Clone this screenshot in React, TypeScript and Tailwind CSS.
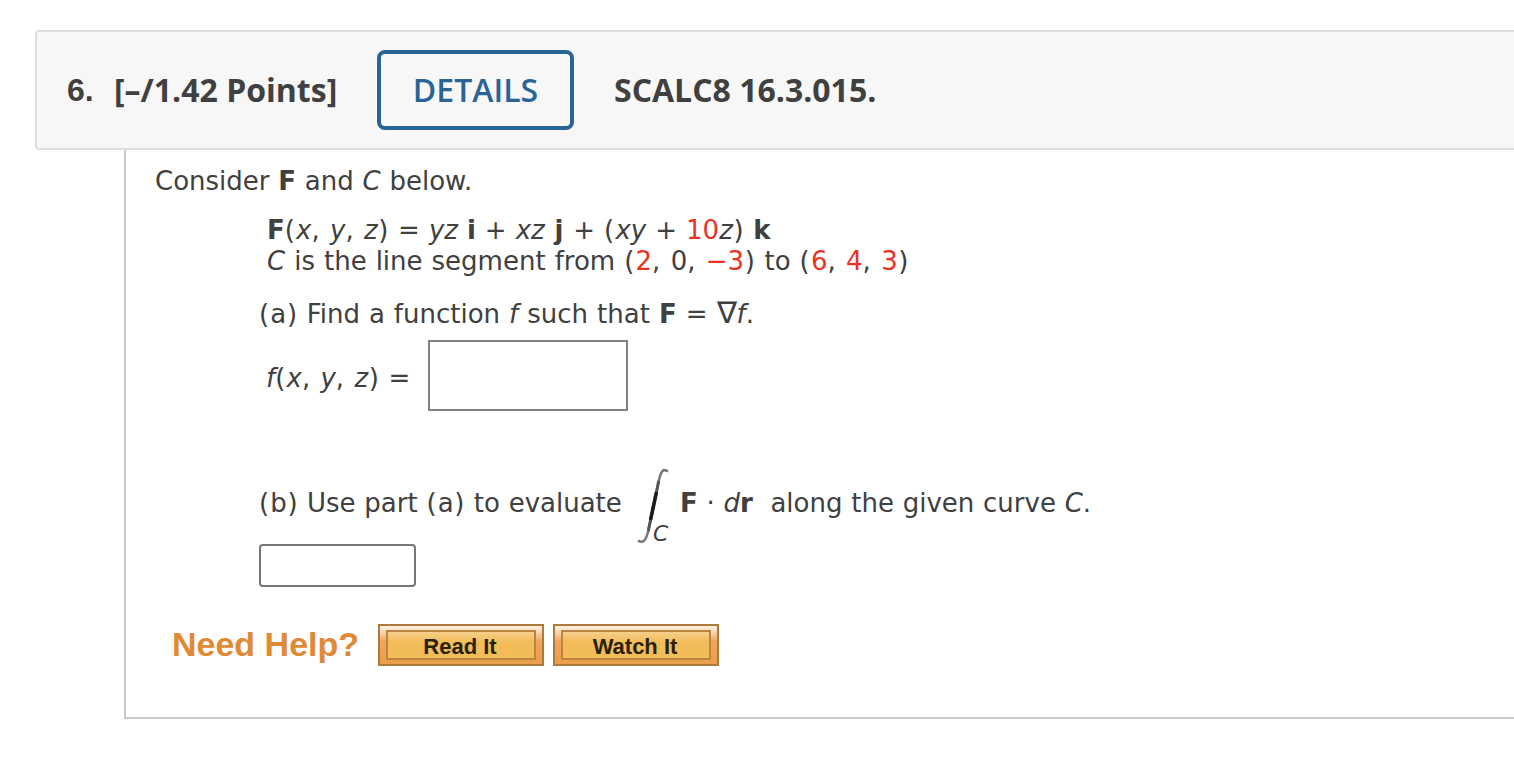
import React, { FC, ReactNode } from "react";

interface ChildrenProps {
  children: ReactNode;
}

// Randomized values are shown in red
const Value: FC<ChildrenProps> = ({ children }) => (
  <span className="text-[#ea3323]">{children}</span>
);

// Parentheses get a little air on both sides
const Paren: FC<ChildrenProps> = ({ children }) => (
  <>
    <span className="pr-[1.2px]">(</span>
    {children}
    <span className="px-[0.6px]">)</span>
  </>
);

const Comma: FC = () => <span className="pr-[1.3px]">, </span>;

const HelpButton: FC<ChildrenProps> = ({ children }) => (
  <button className="h-[42px] w-[166px] border-2 border-[#ae7a3c] bg-linear-to-b from-[#fdebdb] from-5% via-[#efa558] via-40% to-[#ec9f4a] px-[6px] py-[4px]">
    <span className="flex h-full w-full items-center justify-center border-2 border-[#b98541] bg-linear-to-b from-[#f6cf89] to-[#f2bc58] to-40% pt-[3px] pr-[2px] font-['Liberation_Sans',sans-serif] text-[22px] leading-none font-bold [word-spacing:0px] text-[#2b1f08]">
      {children}
    </span>
  </button>
);

const QuestionHeader: FC = () => (
  <header className="ml-[35px] flex h-[120px] items-center rounded-l-[4px] border-2 border-r-0 border-[#dedede] bg-[#f7f7f7] pl-[30px] font-['Open_Sans',sans-serif] text-[32px] font-bold whitespace-nowrap text-[#404040]">
    <span className="w-[47px] pb-px font-['Liberation_Sans',sans-serif]">
      6.
    </span>
    <span className="w-[263px]">[–/1.42 Points]</span>
    <button className="h-[80px] w-[197px] rounded-[8px] border-4 border-[#2a6496] font-semibold text-[#2a6496]">
      DETAILS
    </button>
    <span className="ml-[40px]">SCALC8 16.3.015.</span>
  </header>
);

const Integral: FC = () => (
  <span className="flex w-[34px] items-end">
    <svg width="32" height="76" viewBox="0 0 32 76" fill="none">
      <path
        d="M1 72.5C6 76 9 72 11 64L22 12C24 3 26 0 31 3.5"
        stroke="#777"
        strokeWidth="2.5"
      />
      <path
        d="M11.5 62L21.5 14"
        stroke="#555"
        strokeWidth="3"
        strokeLinecap="round"
      />
      <path d="M13.5 52L19.5 24" stroke="#1a1a1a" strokeWidth="3.5" />
    </svg>
    <i className="-ml-[16px] text-[22px] leading-[20px]">C</i>
  </span>
);

const App: FC = () => {
  return (
    <div className="h-[784px] overflow-hidden bg-white pt-[30px]">
      <QuestionHeader />
      <main className="ml-[124px] h-[569px] border-b-2 border-l-2 border-[#cacaca] font-['DejaVu_Sans',sans-serif] text-[26px] leading-[31px] [word-spacing:0.5px] whitespace-pre text-[#404040]">
        <p className="pt-[16px] pl-[29px]">
          Consider <b>F</b> and <i>C</i> below.
        </p>

        <div className="pt-[18px] pl-[141px] [word-spacing:0.75px]">
          <p>
            <b>F</b>
            <Paren>
              <i>x</i>
              <Comma />
              <i>y</i>
              <Comma />
              <i>z</i>
            </Paren>{" "}
            = <i>yz</i> <b>i</b> + <i>xz</i> <b className="px-[0.8px]">j</b> +{" "}
            <Paren>
              <i>xy</i> + <Value>10</Value>
              <i>z</i>
            </Paren>{" "}
            <b>k</b>
          </p>
          <p>
            <i>C</i> is the line segment from{" "}
            <Paren>
              <Value>2</Value>
              <Comma />0<Comma />
              <Value>−3</Value>
            </Paren>{" "}
            to{" "}
            <Paren>
              <Value>6</Value>
              <Comma />
              <Value>4</Value>
              <Comma />
              <Value>3</Value>
            </Paren>
          </p>
        </div>

        <p className="pt-[21px] pl-[133px] [word-spacing:0.75px]">
          <Paren>a</Paren> Find a function <i>f</i> such that <b>F</b> ={" "}
          <span className="font-['Liberation_Serif',serif] text-[30px] leading-none">
            ∇
          </span>
          <i>f</i>.
        </p>
        <div className="flex pt-[10px] pl-[140px] [word-spacing:0.75px]">
          <span className="w-[162px] pt-[23px]">
            <i>f</i>
            <Paren>
              <i>x</i>
              <Comma />
              <i>y</i>
              <Comma />
              <i>z</i>
            </Paren>{" "}
            =
          </span>
          <div className="h-[71px] w-[200px] border-2 border-[#808080]" />
        </div>

        <div className="mt-[57px] flex h-[76px] items-center pl-[133px]">
          <span className="w-[378px] pb-[6px]">
            <Paren>b</Paren> Use part <Paren>a</Paren> to evaluate
          </span>
          <Integral />
          <span className="pb-[6px] pl-[9px]">
            <b>F</b> · <i>d</i>
            <b>r</b>
            {"  "}along the given curve <i>C</i>.
          </span>
        </div>
        <div className="ml-[133px] h-[43px] w-[157px] rounded-[4px] border-2 border-[#767676]" />

        <div className="mt-[37px] flex items-center pl-[46px]">
          <span className="w-[206px] pb-px font-['Liberation_Sans',sans-serif] text-[34px] font-bold [word-spacing:0px] text-[#e08a35]">
            Need Help?
          </span>
          <div className="flex gap-[9px]">
            <HelpButton>Read It</HelpButton>
            <HelpButton>Watch It</HelpButton>
          </div>
        </div>
      </main>
    </div>
  );
};

export default App;
